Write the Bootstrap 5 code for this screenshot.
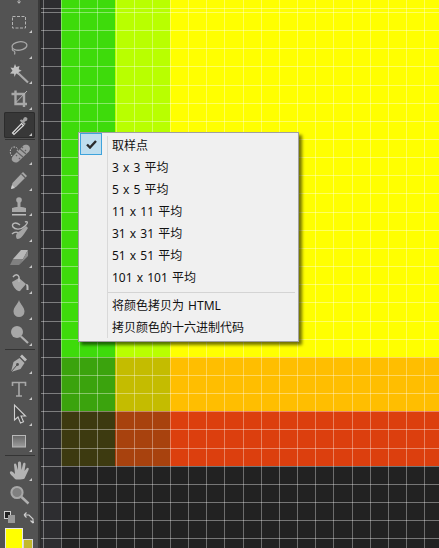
<!DOCTYPE html>
<html lang="zh-CN">
<head>
<meta charset="utf-8">
<title>取样点</title>
<link href="https://cdn.jsdelivr.net/npm/bootstrap@5.3.0/dist/css/bootstrap.min.css" rel="stylesheet">
<style>
html,body{height:100%;overflow:hidden;background:#2d2d30}
.ps-app{width:439px;height:548px;overflow:hidden}
.ps-tools{width:38px;flex:none;background:#535353;overflow:hidden}
.ps-rail{width:3px;flex:none;background:#3a3a3a;border-right:1px solid #2a2a2a}
.ps-tool{height:26px;width:31px;margin-left:4px;position:relative;display:flex;align-items:center;justify-content:center}
.ps-tool svg{display:block;margin-right:2px}
.ps-tool.has-more::after{content:"";position:absolute;right:3px;bottom:2px;border-left:3px solid transparent;border-bottom:3px solid #c8c8c8}
.ps-tool.is-on{background:#383838;box-shadow:inset 0 0 0 1px #2c2c2c;border-radius:2px}
.ps-top{height:9px;overflow:hidden;align-items:flex-start}
.ps-sep{height:1px;margin:1px 3px 1px 5px;background:#343434}
.ps-mini{height:20px;padding:3px 0 0 4px;gap:8px}
.ps-swatches{position:relative;height:20px}
.ps-fg{position:absolute;left:5px;top:0;width:18px;height:24px;background:#ff0;border:1px solid #e9e9e9;z-index:1}
.ps-bg{position:absolute;left:23px;top:11px;width:10px;height:12px;background:#c3b92c;border:1px solid #d8d8d8}
.ps-canvas{position:relative;flex:1;min-width:0;display:grid;grid-template-columns:20px 54px 55px 1fr;grid-template-rows:357px 54px 55px 1fr}
.c-dark{background:#2d2d30}
.c-g1{background:#3edb0b}.c-l1{background:#b9ff00}.c-y1{background:#ff0}
.c-g2{background:#3ba30d}.c-l2{background:#c4bc00}.c-y2{background:#ffbe00}
.c-g3{background:#3d3a10}.c-l3{background:#a8420e}.c-y3{background:#dc3f0e}
.c-k{background:#222}
.ps-lines{position:absolute;inset:0;pointer-events:none;
 background-image:
  repeating-linear-gradient(to right,rgba(255,255,255,.34) 0,rgba(255,255,255,.34) 1px,transparent 1px,transparent 18.15px),
  repeating-linear-gradient(to bottom,rgba(255,255,255,.38) 0,rgba(255,255,255,.38) 1px,transparent 1px,transparent 18.15px);
 background-position:2px 0,0 12px;
}
.ps-menu.dropdown-menu{position:absolute;left:37px;top:132px;width:221px;height:210px;margin:0;padding:2px 0 0;background:#f0f0f0;border:1px solid #a0a0a0;border-radius:0;box-shadow:3px 3px 3px rgba(0,0,0,.55);z-index:5;font-family:"Noto Sans","Noto Sans CJK SC",sans-serif;font-size:12px;color:#111}
.ps-menu::before{content:"";position:absolute;left:28px;top:3px;bottom:3px;width:1px;background:#d9d9d9}
.ps-menu .dropdown-item{height:22px;padding:0 0 0 33px;line-height:22px;color:#111;white-space:nowrap;position:relative;word-spacing:1px}
.ps-menu .dropdown-divider{height:0;margin:3px 3px 2px 29px;border-top:1px solid #d4d4d4;opacity:1}
.ps-check{position:absolute;left:1px;top:0;width:22px;height:22px;background:#bfdeee;border:1px solid #3ea3dc;display:flex;align-items:center;justify-content:center;z-index:1}
</style>
</head>
<body>
<div class="ps-app d-flex">
  <nav class="ps-tools d-flex flex-column">
    <div class="ps-tool ps-top"><svg width="24" height="9" viewBox="0 0 24 9"><path d="M12 0v3M10.500 1.500l1.500 1.800 1.500-1.800" fill="none" stroke="#bbb"/></svg></div>
    <div class="ps-tool has-more"><svg width="24" height="24" viewBox="0 0 24 24"><rect x="5.500" y="6.500" width="13" height="11.500" fill="none" stroke="#b4b4b4" stroke-dasharray="3 1.500"/></svg></div>
    <div class="ps-tool has-more"><svg width="24" height="24" viewBox="0 0 24 24"><ellipse cx="12.500" cy="10" rx="7.500" ry="4.200" fill="none" stroke="#a8a8a8" stroke-width="1.300" transform="rotate(-8 12 10)"/><path d="M5.500 12c-.8 2 .5 3 1.500 3s1 2 .5 3.500" fill="none" stroke="#a8a8a8" stroke-width="1.200"/></svg></div>
    <div class="ps-tool has-more"><svg width="26" height="24" viewBox="0 0 26 24"><path d="M9 3l1.300 3L13.500 5l-.8 3.300 3 1.500-3 1.300.7 3-3.300-1.500L8.500 16 8 12.800 4 12.500l2.500-2.700L4.500 6.500 7.500 7z" fill="#c0c0c0"/><path d="M12 12l10 9.500" stroke="#ababab" stroke-width="2.200"/></svg></div>
    <div class="ps-tool has-more"><svg width="24" height="24" viewBox="0 0 24 24"><path d="M8.500 3.500V17H20M4.500 7H17V20" fill="none" stroke="#a8a8a8" stroke-width="2.400"/><path d="M9 15.500L20 4" stroke="#b5b5b5" stroke-width="1"/></svg></div>
    <div class="ps-tool has-more is-on"><svg width="24" height="24" viewBox="0 0 24 24"><path d="M5.500 20l9-9.500 2 2L7 21.500z" fill="none" stroke="#dcdcdc" stroke-width="1.200"/><path d="M14 8.500l2-2 1-2 2-.5 1.500 1.500-.5 2-2 1-2 2z" fill="#a2a2a2"/><path d="M13.500 7l4.500 4.500" stroke="#a2a2a2" stroke-width="2"/></svg></div>
    <div class="ps-sep"></div>
    <div class="ps-tool has-more"><svg width="26" height="24" viewBox="0 0 26 24"><path d="M6 14C3 11 4 5 8 5s4 3 3 4" fill="none" stroke="#c4c4c4" stroke-dasharray="1.500 1.200"/><path d="M7 14L17 4c2-2 5-1 6 0s1.500 3.500 0 5.500L13 19c-2 2-4 2-6 .5s-1.500-3.500 0-5.500z" fill="#a0a0a0"/><path d="M11 10l6 5M14 7l6 5M10 13l1 1M13 16l1 1M16 5l1 1M19 8l1 1" stroke="#626262" stroke-width="1.200"/></svg></div>
    <div class="ps-tool has-more"><svg width="24" height="24" viewBox="0 0 24 24"><path d="M4 21l1.500-6L16 4l4 4L9 19z" fill="#a8a8a8"/><path d="M14.500 6l4 4" stroke="#606060" stroke-width="1.200"/><path d="M4 21l1-4 3 3z" fill="#d0d0d0"/></svg></div>
    <div class="ps-tool has-more"><svg width="24" height="24" viewBox="0 0 24 24"><circle cx="12" cy="6" r="2.800" fill="#a8a8a8"/><path d="M10.500 8h3v5h-3z" fill="#a8a8a8"/><path d="M5 14c2-1.500 12-1.500 14 0v4H5z" fill="#a8a8a8"/><path d="M5 20h14v1.500H5z" fill="#bcbcbc"/></svg></div>
    <div class="ps-tool has-more"><svg width="26" height="24" viewBox="0 0 26 24"><path d="M14 6C9 2 5 5 7 8s8 3 12-1 2-5 0-4" fill="none" stroke="#b8b8b8" stroke-width="1.400"/><path d="M6 15c3-3 6-2 8 0" fill="none" stroke="#b8b8b8" stroke-width="1.400"/><path d="M11 20c-2-3-1-6 3-8l6-5 2 2-4 6c-2 3-4 5-7 5z" fill="#a4a4a4"/></svg></div>
    <div class="ps-tool has-more"><svg width="26" height="24" viewBox="0 0 26 24"><path d="M4 20l3-6h10l-4 6z" fill="#808080"/><path d="M7 14l8-9h7l-5 9z" fill="#b8b8b8"/><path d="M17 14l5-9v6l-9 9z" fill="#8e8e8e"/></svg></div>
    <div class="ps-tool has-more"><svg width="26" height="24" viewBox="0 0 26 24"><path d="M6 11l7-4 7 6-6 7c-2 1-7-3-8-9z" fill="#a8a8a8"/><path d="M7 6c2-3 5-3 6 0v5" fill="none" stroke="#bbb" stroke-width="1.400"/><path d="M20 13c2 0 2.500 1 2.500 3v3h-2v-3z" fill="#bbb"/></svg></div>
    <div class="ps-tool has-more"><svg width="24" height="24" viewBox="0 0 24 24"><path d="M12 3c1 4 5.500 7 5.500 11.500a5.500 5.500 0 0 1-11 0C6.500 10 11 7 12 3z" fill="#a4a4a4"/></svg></div>
    <div class="ps-tool has-more"><svg width="26" height="24" viewBox="0 0 26 24"><circle cx="11" cy="9" r="6" fill="#a8a8a8"/><path d="M15 13.500l7 6.500" stroke="#b0b0b0" stroke-width="2.200"/></svg></div>
    <div class="ps-sep"></div>
    <div class="ps-tool has-more"><svg width="26" height="24" viewBox="0 0 26 24"><path d="M5 21l2.500-10 6-4 5 5-4 6z" fill="#adadad"/><path d="M5 21l6-7" stroke="#505050" stroke-width="1"/><circle cx="11.500" cy="13.500" r="1.400" fill="#505050"/><path d="M14 5.500l2-2 5 5-2 2z" fill="#bdbdbd"/></svg></div>
    <div class="ps-tool has-more"><svg width="24" height="24" viewBox="0 0 24 24"><path d="M5.500 9V5.500h13V9M12 5.500V19M9 19h6" fill="none" stroke="#a8a8a8" stroke-width="1.600"/></svg></div>
    <div class="ps-tool has-more"><svg width="24" height="24" viewBox="0 0 24 24"><path d="M7.500 2v15l3.500-3 2.500 6 3-1.300-2.500-5.700h4.500z" fill="#484848" stroke="#cfcfcf" stroke-width="1.100"/></svg></div>
    <div class="ps-tool has-more"><svg width="24" height="24" viewBox="0 0 24 24"><defs><linearGradient id="rectfill" x1="0" y1="0" x2="0" y2="1"><stop offset="0" stop-color="#666"/><stop offset="1" stop-color="#9c9c9c"/></linearGradient></defs><rect x="5.500" y="6.500" width="13" height="11.500" fill="url(#rectfill)" stroke="#b8b8b8"/></svg></div>
    <div class="ps-sep"></div>
    <div class="ps-tool has-more"><svg width="24" height="24" viewBox="0 0 24 24"><path d="M8 21c-2-3-6-5-5-7s4 1 5 2L7 7c0-2 2-2 2.500 0L11 12 11 5c0-2 3-2 3 0l.5 7L16 6c.5-2 3-1.500 2.500.5L17.500 13l2-2.500c1-1.500 3-.5 2 1.500l-4 8.500c-1 1-8.500 1.500-9.500.5z" fill="#b4b4b4"/></svg></div>
    <div class="ps-tool"><svg width="26" height="24" viewBox="0 0 26 24"><circle cx="11" cy="9.500" r="5.600" fill="#808080" stroke="#a8a8a8" stroke-width="2"/><path d="M15.500 14l7 6.500" stroke="#b0b0b0" stroke-width="2.400"/></svg></div>
    <div class="ps-mini d-flex"><svg width="11" height="12" viewBox="0 0 11 12"><rect x=".500" y=".500" width="6" height="7" fill="#222" stroke="#d0d0d0"/><rect x="4.500" y="4.500" width="6" height="7" fill="#999" stroke="#999"/></svg><svg width="11" height="13" viewBox="0 0 11 13"><path d="M1 4h5l4 4v3M1 4l2.500-2.500M1 4l2.500 2.500M10 12l-2.500-2.500M10 12l1-1.500" fill="none" stroke="#d0d0d0" stroke-width="1.100"/></svg></div>
    <div class="ps-swatches"><span class="ps-fg"></span><span class="ps-bg"></span></div>
  </nav>
  <div class="ps-rail"></div>
  <main class="ps-canvas">
    <div class="c-dark"></div><div class="c-g1"></div><div class="c-l1"></div><div class="c-y1"></div>
    <div class="c-dark"></div><div class="c-g2"></div><div class="c-l2"></div><div class="c-y2"></div>
    <div class="c-dark"></div><div class="c-g3"></div><div class="c-l3"></div><div class="c-y3"></div>
    <div class="c-dark"></div><div class="c-k"></div><div class="c-k"></div><div class="c-k"></div>
    <div class="ps-lines"></div>
    <ul class="dropdown-menu show ps-menu list-unstyled">
      <li><span class="ps-check"><svg width="11" height="9" viewBox="0 0 11 9"><path d="M1 4.500l3 3 6-6.500" fill="none" stroke="#2b2b2b" stroke-width="2.400"/></svg></span><a class="dropdown-item" href="#">取样点</a></li>
      <li><a class="dropdown-item" href="#">3 x 3 平均</a></li>
      <li><a class="dropdown-item" href="#">5 x 5 平均</a></li>
      <li><a class="dropdown-item" href="#">11 x 11 平均</a></li>
      <li><a class="dropdown-item" href="#">31 x 31 平均</a></li>
      <li><a class="dropdown-item" href="#">51 x 51 平均</a></li>
      <li><a class="dropdown-item" href="#">101 x 101 平均</a></li>
      <li><hr class="dropdown-divider"></li>
      <li><a class="dropdown-item" href="#">将颜色拷贝为 HTML</a></li>
      <li><a class="dropdown-item" href="#">拷贝颜色的十六进制代码</a></li>
    </ul>
  </main>
</div>
<script src="https://cdn.jsdelivr.net/npm/bootstrap@5.3.0/dist/js/bootstrap.bundle.min.js"></script>
</body>
</html>
